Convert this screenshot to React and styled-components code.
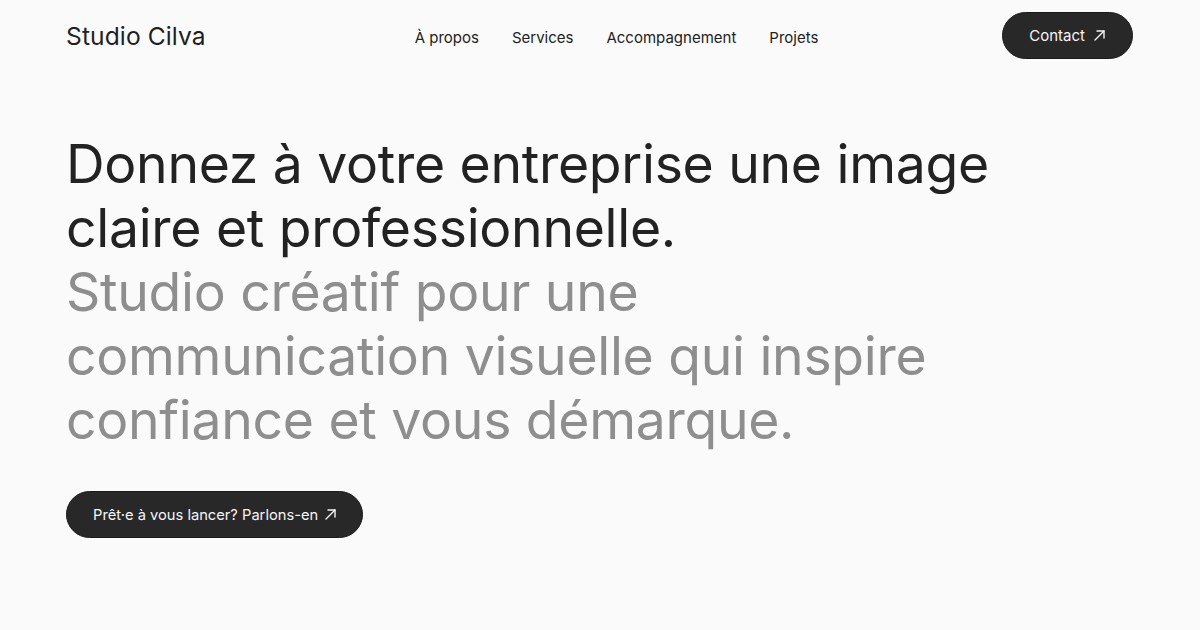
import React from "react";
import styled, { createGlobalStyle } from "styled-components";

const Global = createGlobalStyle`
  html, body { margin: 0; padding: 0; background: #fafafa; }
  body { font-family: Inter, "Noto Sans", sans-serif; color: #242424; -webkit-font-smoothing: antialiased; }
  * { box-sizing: border-box; }
`;

const Page = styled.div`
  width: 1200px;
  height: 630px;
  background: #fafafa;
  padding: 0 67px 0 66px;
  overflow: hidden;
`;

const Header = styled.header`
  display: grid;
  grid-template-columns: 1fr auto 1fr;
  align-items: center;
  height: 70px;
  padding-top: 1px;
`;

const Logo = styled.div`
  font-size: 24.6px;
  font-weight: 400;
  letter-spacing: 0.1px;
  color: #1f1f1f;
  padding-top: 1px;
`;

const Nav = styled.nav`
  display: flex;
  gap: 33px;
  font-size: 15px;
  color: #222;
  padding-left: 34px;
  padding-top: 3px;
`;

const NavLink = styled.a`
  color: inherit;
  text-decoration: none;
`;

const Right = styled.div`
  display: flex;
  justify-content: flex-end;
`;

const PillButton = styled.a`
  display: inline-flex;
  align-items: center;
  gap: ${(p) => p.$gap}px;
  height: ${(p) => p.$h}px;
  padding: 0 ${(p) => p.$pr}px 0 ${(p) => p.$pl}px;
  border-radius: 999px;
  background: #282828;
  border: 1px solid #1a1a1a;
  color: #f5f5f5;
  font-size: ${(p) => p.$fs}px;
  text-decoration: none;
  white-space: nowrap;
`;

const Hero = styled.section`
  padding-top: 62px;
`;

const Title = styled.h1`
  margin: 0;
  font-size: 53.5px;
  font-weight: 400;
  line-height: 64px;
  letter-spacing: -0.3px;
  color: #222;
  max-width: 960px;
`;

const Sub = styled.span`
  display: block;
  color: #8e8e8e;
  max-width: 900px;
`;

const CtaRow = styled.div`
  margin-top: 39px;
`;

const Arrow = () => (
  <svg width="13" height="13" viewBox="0 0 13 13" fill="none" stroke="currentColor" strokeWidth="1.4" strokeLinecap="round" strokeLinejoin="round">
    <path d="M2 11 L11 2" />
    <path d="M4 2 H11 V9" />
  </svg>
);

export default function App() {
  return (
    <Page>
      <Global />
      <Header>
        <Logo>Studio Cilva</Logo>
        <Nav>
          <NavLink>À propos</NavLink>
          <NavLink>Services</NavLink>
          <NavLink>Accompagnement</NavLink>
          <NavLink>Projets</NavLink>
        </Nav>
        <Right>
          <PillButton $h={47} $pl={26} $pr={26} $gap={8} $fs={15}>Contact <Arrow /></PillButton>
        </Right>
      </Header>
      <Hero>
        <Title>
          Donnez à votre entreprise une image claire et professionnelle.
          <Sub>Studio créatif pour une communication visuelle qui inspire confiance et vous démarque.</Sub>
        </Title>
        <CtaRow>
          <PillButton $h={47} $pl={26} $pr={25} $gap={6} $fs={14.7}>Prêt·e à vous lancer? Parlons-en <Arrow /></PillButton>
        </CtaRow>
      </Hero>
    </Page>
  );
}
